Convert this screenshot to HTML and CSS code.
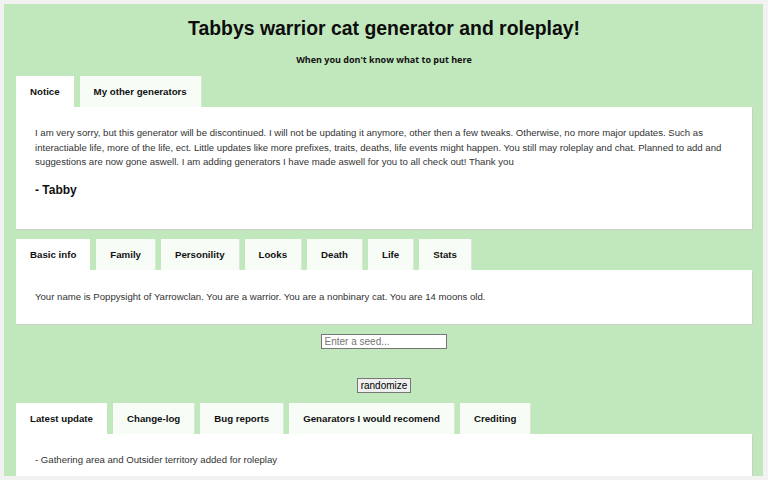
FILE: index.html
```html
<!DOCTYPE html>
<html>
<head>
<meta charset="utf-8">
<link rel="stylesheet" href="styles.css">
</head>
<body>
<div class="page">
  <h1 class="title">Tabbys warrior cat generator and roleplay!</h1>
  <p class="subtitle">When you don't know what to put here</p>

  <section class="tabset first">
    <div class="tabs">
      <div class="tab active">Notice</div>
      <div class="tab">My other generators</div>
    </div>
    <div class="panel notice">
      <p class="text">I am very sorry, but this generator will be discontinued. I will not be updating it anymore, other then a few tweaks. Otherwise, no more major updates. Such as interactiable life, more of the life, ect. Little updates like more prefixes, traits, deaths, life events might happen. You still may roleplay and chat. Planned to add and suggestions are now gone aswell. I am adding generators I have made aswell for you to all check out! Thank you</p>
      <p class="sign">- Tabby</p>
    </div>
  </section>

  <section class="tabset second">
    <div class="tabs">
      <div class="tab active">Basic info</div>
      <div class="tab">Family</div>
      <div class="tab">Personility</div>
      <div class="tab">Looks</div>
      <div class="tab">Death</div>
      <div class="tab">Life</div>
      <div class="tab">Stats</div>
    </div>
    <div class="panel info">
      <p class="text">Your name is Poppysight of Yarrowclan. You are a warrior. You are a nonbinary cat. You are 14 moons old.</p>
    </div>
  </section>

  <div class="controls">
    <input class="seed" type="text" placeholder="Enter a seed...">
    <button class="rand">randomize</button>
  </div>

  <section class="tabset third">
    <div class="tabs">
      <div class="tab active">Latest update</div>
      <div class="tab">Change-log</div>
      <div class="tab">Bug reports</div>
      <div class="tab">Genarators I would recomend</div>
      <div class="tab">Crediting</div>
    </div>
    <div class="panel updates">
      <p class="text">- Gathering area and Outsider territory added for roleplay</p>
    </div>
  </section>
</div>
</body>
</html>
```

FILE: styles.css
```css
html, body {
  margin: 0;
  padding: 0;
}
body {
  background: #f2f2f2;
  padding: 4px 5px 0 4px;
  font-family: "Liberation Sans", Arial, sans-serif;
  color: #111;
}
.page {
  background: #c1e7bc;
  height: 472px;
  overflow: hidden;
  padding: 0 11px 0 12px;
  display: flex;
  flex-direction: column;
}
.title {
  margin: 13px 0 0;
  font-size: 19.4px;
  line-height: 23px;
  font-weight: bold;
  text-align: center;
  color: #0d0d0d;
}
.subtitle {
  margin: 13px 0 0;
  font-family: "Open Sans", "DejaVu Sans", sans-serif;
  font-size: 9px;
  line-height: 13px;
  font-weight: bold;
  text-align: center;
}
.tabs {
  display: flex;
  gap: 6px;
}
.tab {
  height: 31px;
  line-height: 31px;
  padding: 0 14px;
  font-size: 9.7px;
  font-weight: bold;
  background: #f7fcf6;
  color: #111;
  box-shadow: 1px 0 0 #d8e8d5;
}
.tab.active {
  background: #fff;
  box-shadow: none;
}
.panel {
  background: #fff;
  box-shadow: 1px 1px 0 #c9cfc8;
  padding: 0 19px;
}
.text {
  margin: 0;
  font-size: 9.6px;
  line-height: 14.5px;
  color: #333;
}
.notice .text {
  max-width: 690px;
}
.first {
  margin-top: 10px;
}
.notice {
  height: 122px;
  box-sizing: border-box;
  padding-top: 19px;
}
.sign {
  margin: 13px 0 0;
  font-size: 12px;
  font-weight: bold;
  color: #111;
}
.second {
  margin-top: 10px;
}
.info {
  height: 54px;
  box-sizing: border-box;
  padding-top: 20px;
}
.controls {
  display: flex;
  flex-direction: column;
  align-items: center;
  margin-top: 10px;
}
.seed {
  box-sizing: border-box;
  width: 126px;
  height: 15px;
  margin: 0 0 0 -1px;
  padding: 0 3px;
  border: 1px solid #767676;
  font-family: "Liberation Sans", Arial, sans-serif;
  font-size: 10px;
  background: #fff;
}
.seed::placeholder {
  color: #757575;
}
.rand {
  margin-top: 29px;
  box-sizing: border-box;
  height: 15px;
  padding: 0 3px;
  border: 1px solid #767676;
  border-radius: 0;
  background: #efefef;
  font-family: "Liberation Sans", Arial, sans-serif;
  font-size: 10px;
  line-height: 12px;
  color: #000;
}
.third {
  margin-top: 10px;
}
.updates {
  height: 60px;
  box-sizing: border-box;
  padding-top: 19px;
}
```
